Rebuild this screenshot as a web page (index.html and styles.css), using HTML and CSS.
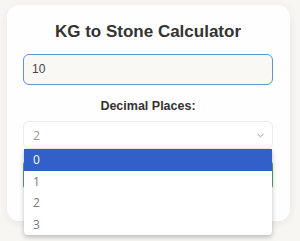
FILE: index.html
```html
<!DOCTYPE html>
<html lang="en">

<head>
    <meta charset="UTF-8">
    <meta name="viewport" content="width=device-width, initial-scale=1.0">
    <title>KG to Stone Calculator</title>
    <link rel="stylesheet" href="styles.css">
</head>

<body>
    <div class="card">
        <h1 class="title">KG to Stone Calculator</h1>

        <div class="input-box">10</div>

        <label class="label">Decimal Places:</label>

        <div class="select-wrap">
            <div class="select">
                <span>2</span>
                <svg class="chevron" width="7" height="5" viewBox="0 0 7 5">
                    <polyline points="0.5,1 3.5,3.8 6.5,1" fill="none" stroke="#999" stroke-width="1" />
                </svg>
            </div>

            <ul class="dropdown">
                <li class="option active">0</li>
                <li class="option">1</li>
                <li class="option">2</li>
                <li class="option">3</li>
            </ul>
        </div>

        <div class="btn">Convert</div>
    </div>
</body>

</html>
```

FILE: styles.css
```css
html,
body {
    min-height: 100%;
}

body {
    margin: 0;
    min-height: 241px;
    background-color: #f7f6f3;
    font-family: "Liberation Sans", Arial, sans-serif;
}

.card {
    width: 250px;
    margin: 5px 0 0 7px;
    padding: 17px 17px 30px 16px;
    background-color: #fefefe;
    border-radius: 12px;
    box-shadow: 0 2px 10px rgba(0, 0, 0, 0.07);
}

.title {
    margin: 0 0 12px;
    font-size: 17px;
    line-height: 20px;
    text-align: center;
    color: #333;
}

.input-box {
    height: 29px;
    line-height: 29px;
    padding: 0 8px;
    border: 1.5px solid #5b95d8;
    border-radius: 6px;
    background-color: #f9f8f5;
    font-size: 12px;
    color: #444;
}

.label {
    display: block;
    margin-top: 13px;
    font-size: 12.5px;
    font-weight: 700;
    line-height: 16px;
    text-align: center;
    color: #333;
}

.select-wrap {
    position: relative;
    margin-top: 7px;
}

.select {
    display: flex;
    align-items: center;
    justify-content: space-between;
    height: 26px;
    padding: 0 8px 0 9px;
    border: 1px solid #ebebeb;
    border-radius: 6px;
    background-color: #fff;
    font-family: "Open Sans", sans-serif;
    font-size: 12.5px;
    color: #999;
}

.dropdown {
    position: absolute;
    top: 28px;
    left: 1px;
    right: 1px;
    margin: 0;
    padding: 0;
    list-style-type: none;
    background-color: #fff;
    border-radius: 0 0 4px 4px;
    box-shadow: 0 2px 5px rgba(0, 0, 0, 0.25);
    z-index: 10;
    overflow: hidden;
}

.option {
    height: 21.5px;
    line-height: 21.5px;
    padding-left: 9px;
    font-family: "Open Sans", sans-serif;
    font-size: 12px;
    color: #777;
}

.option.active {
    background-color: #3060c8;
    color: #fff;
}

.btn {
    margin-top: 10px;
    height: 32px;
    line-height: 32px;
    border-radius: 6px;
    background-color: #5a9e6a;
    color: #fff;
    font-size: 13px;
    font-weight: 700;
    text-align: center;
}
```
